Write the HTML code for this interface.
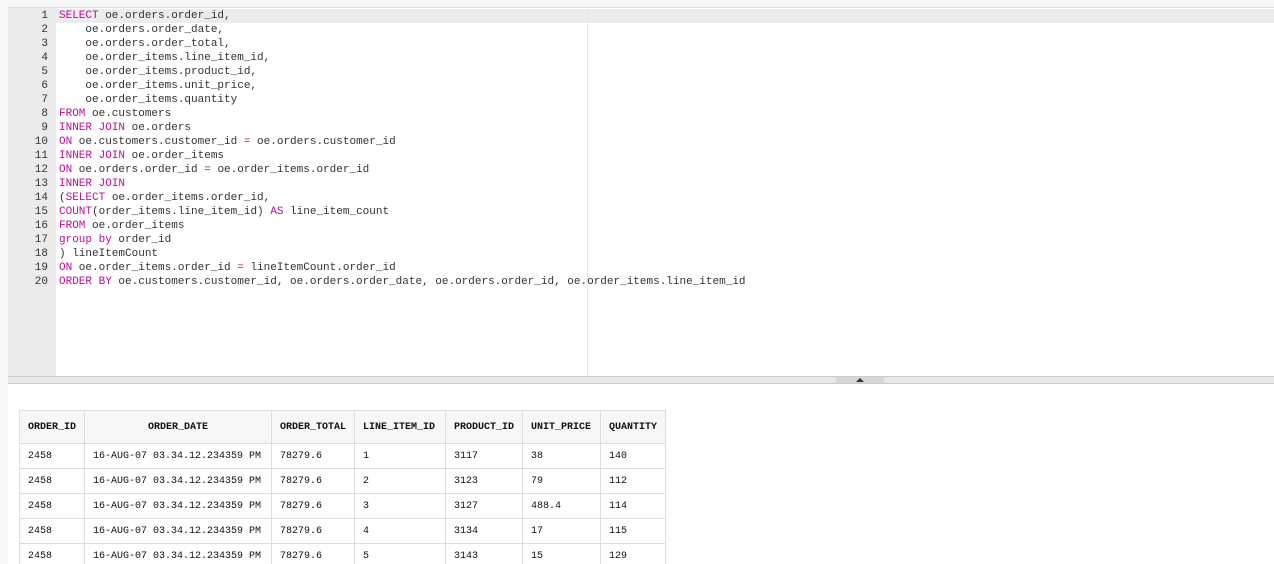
<!DOCTYPE html>
<html style="overflow:hidden;height:564px"><head><meta charset="utf-8"><style>
body{margin:0;width:1274px;height:564px;background:#f7f7f7;overflow:hidden;position:relative;font-family:"Liberation Mono","DejaVu Sans Mono",monospace}
#ed{position:absolute;left:8px;top:7px;width:1266px;height:369px;background:#fff;border-top:1px solid #ddd;box-sizing:border-box}
#gut{position:absolute;left:0;top:0;width:48px;height:100%;background:#ebebeb}
.ln{position:absolute;left:0;width:40px;text-align:right;font-size:11px;color:#333;line-height:14px}
.cl{position:absolute;left:51px;font-size:11px;line-height:14px;color:#333;white-space:pre}
.k{color:#c5089c}
#hl{position:absolute;left:0;top:1px;width:100%;height:14px;background:#ececec}
#pm{position:absolute;left:579px;top:0;width:1px;height:100%;background:#e8e8e8}
#sp{position:absolute;left:8px;top:376px;width:1266px;height:8px;background:#e8e8e8;border-top:1px solid #ccc;border-bottom:1px solid #ccc;box-sizing:border-box}
#knob{position:absolute;left:828px;top:0;width:48px;height:6px;background:#d6d6d6}
#knob:after{content:"";position:absolute;left:20px;top:1px;border-left:4px solid transparent;border-right:4px solid transparent;border-bottom:4px solid #333}
#res{position:absolute;left:8px;top:384px;width:1266px;height:180px;background:#fff;overflow:hidden}
table{position:absolute;left:11px;top:26px;border-collapse:collapse;font-size:10px;color:#111}
td,th{border:1px solid #ddd;padding:0 8px;text-align:left;height:24px;white-space:nowrap}
th{height:32px;background:#f7f7f7;font-weight:bold}
</style></head><body>
<div id="ed"><div id="hl"></div><div id="gut"></div><div id="pm"></div>
<div class="ln" style="top:1px">1</div><div class="ln" style="top:15px">2</div><div class="ln" style="top:29px">3</div><div class="ln" style="top:43px">4</div><div class="ln" style="top:57px">5</div><div class="ln" style="top:71px">6</div><div class="ln" style="top:85px">7</div><div class="ln" style="top:99px">8</div><div class="ln" style="top:113px">9</div><div class="ln" style="top:127px">10</div><div class="ln" style="top:141px">11</div><div class="ln" style="top:155px">12</div><div class="ln" style="top:169px">13</div><div class="ln" style="top:183px">14</div><div class="ln" style="top:197px">15</div><div class="ln" style="top:211px">16</div><div class="ln" style="top:225px">17</div><div class="ln" style="top:239px">18</div><div class="ln" style="top:253px">19</div><div class="ln" style="top:267px">20</div>
<div class="cl" style="top:1px"><span class="k">SELECT</span> oe.orders.order_id,
    oe.orders.order_date,
    oe.orders.order_total,
    oe.order_items.line_item_id,
    oe.order_items.product_id,
    oe.order_items.unit_price,
    oe.order_items.quantity
<span class="k">FROM</span> oe.customers
<span class="k">INNER JOIN</span> oe.orders
<span class="k">ON</span> oe.customers.customer_id <span class="k">=</span> oe.orders.customer_id
<span class="k">INNER JOIN</span> oe.order_items
<span class="k">ON</span> oe.orders.order_id <span class="k">=</span> oe.order_items.order_id
<span class="k">INNER JOIN</span>
(<span class="k">SELECT</span> oe.order_items.order_id,
<span class="k">COUNT</span>(order_items.line_item_id) <span class="k">AS</span> line_item_count
<span class="k">FROM</span> oe.order_items
<span class="k">group by</span> order_id
) lineItemCount
<span class="k">ON</span> oe.order_items.order_id <span class="k">=</span> lineItemCount.order_id
<span class="k">ORDER BY</span> oe.customers.customer_id, oe.orders.order_date, oe.orders.order_id, oe.order_items.line_item_id</div>
</div>
<div id="sp"><div id="knob"></div></div>
<div id="res"><table>
<tr><th style="width:48px">ORDER_ID</th><th style="width:170px;text-align:center">ORDER_DATE</th><th style="width:66px">ORDER_TOTAL</th><th style="width:74px">LINE_ITEM_ID</th><th style="width:58px">PRODUCT_ID</th><th style="width:61px">UNIT_PRICE</th><th style="width:47px">QUANTITY</th></tr>
<tr><td>2458</td><td>16-AUG-07 03.34.12.234359 PM</td><td>78279.6</td><td>1</td><td>3117</td><td>38</td><td>140</td></tr>
<tr><td>2458</td><td>16-AUG-07 03.34.12.234359 PM</td><td>78279.6</td><td>2</td><td>3123</td><td>79</td><td>112</td></tr>
<tr><td>2458</td><td>16-AUG-07 03.34.12.234359 PM</td><td>78279.6</td><td>3</td><td>3127</td><td>488.4</td><td>114</td></tr>
<tr><td>2458</td><td>16-AUG-07 03.34.12.234359 PM</td><td>78279.6</td><td>4</td><td>3134</td><td>17</td><td>115</td></tr>
<tr><td>2458</td><td>16-AUG-07 03.34.12.234359 PM</td><td>78279.6</td><td>5</td><td>3143</td><td>15</td><td>129</td></tr>
</table></div>
</body></html>
